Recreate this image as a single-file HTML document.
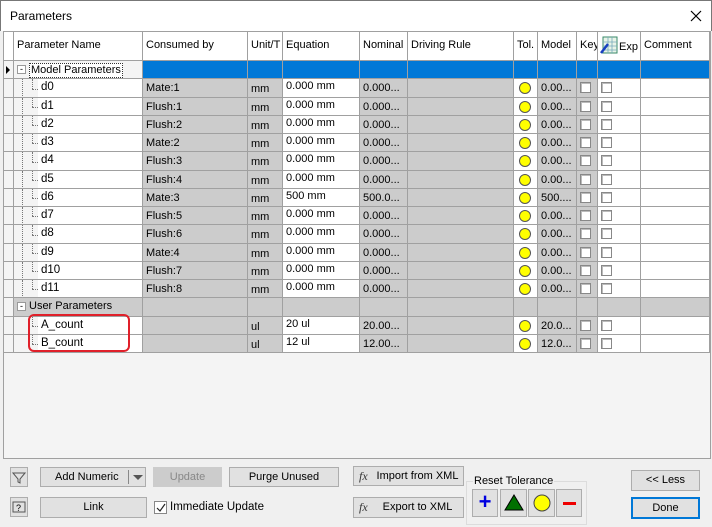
<!DOCTYPE html>
<html><head><meta charset="utf-8"><style>
*{box-sizing:border-box;margin:0;padding:0}
body{width:712px;height:527px;overflow:hidden;background:#f0f0f0;font-family:"Liberation Sans",sans-serif;font-size:11px;color:#000;position:relative}
.a{position:absolute}
#title{left:0;top:0;width:712px;height:31px;background:#fff;border:1px solid #777;border-bottom:none}
#grid{left:3px;top:31px;width:708px;height:428px;background:#f4f4f4;border:1px solid #a0a0a0;overflow:hidden}
.c{position:absolute;border-right:1px solid #a0a0a0;border-bottom:1px solid #a0a0a0;padding:2px 3px;white-space:nowrap;overflow:hidden;line-height:13px}
.btn{position:absolute;background:#e1e1e1;border:1px solid #adadad;text-align:center;line-height:18px;font-size:11px}
.cb{position:absolute;width:11px;height:11px;border:1px solid #888;background:#fff;box-shadow:inset 1px 1px 0 #bbb}
.dot{position:absolute;width:12px;height:12px;border-radius:50%;background:#ffff00;border:1px solid #555}
</style></head><body>
<div id="title" class="a"><span class="a" style="left:9px;top:8px;font-size:12px">Parameters</span>
<svg class="a" style="left:689px;top:9px" width="12" height="12"><path d="M1 1L11 11M11 1L1 11" stroke="#000" stroke-width="1.2"/></svg></div>
<div id="grid" class="a"></div>

<div class="btn" style="left:10px;top:467px;width:18px;height:20px"><svg width="14" height="14" style="margin-top:3px"><path d="M1 2H13L8 8V12L6 11V8Z" fill="none" stroke="#555"/></svg></div>
<div class="btn" style="left:40px;top:467px;width:106px;height:20px;text-align:left;padding-left:14px">Add Numeric<span class="a" style="left:87px;top:2px;height:14px;border-left:1px solid #888"></span><span class="a" style="left:92px;top:7px;border-left:5px solid transparent;border-right:5px solid transparent;border-top:5px solid #555"></span></div>
<div class="btn" style="left:153px;top:467px;width:69px;height:20px;background:#ccc;border-color:#ccc;color:#888">Update</div>
<div class="btn" style="left:229px;top:467px;width:110px;height:20px">Purge Unused</div>
<div class="btn" style="left:353px;top:466px;width:111px;height:20px;padding-left:18px"><i class="a" style="left:5px;top:0;font-family:'Liberation Serif';font-size:12px;color:#333">fx</i>Import from XML</div>
<div class="btn" style="left:10px;top:497px;width:18px;height:20px"><svg width="14" height="14" style="margin-top:3px"><rect x="1" y="1" width="12" height="10" fill="none" stroke="#555"/><text x="4" y="10" font-size="9" font-family="Liberation Sans">?</text></svg></div>
<div class="btn" style="left:40px;top:497px;width:107px;height:21px">Link</div>
<div class="cb" style="left:154px;top:501px;width:13px;height:13px;box-shadow:none"><svg class="a" style="left:1px;top:1px" width="10" height="10"><path d="M1 5L4 8L9 1" fill="none" stroke="#222" stroke-width="1.2"/></svg></div>
<span class="a" style="left:170px;top:501px;font-size:11.5px">Immediate Update</span>
<div class="btn" style="left:353px;top:497px;width:111px;height:21px;padding-left:18px"><i class="a" style="left:5px;top:0;font-family:'Liberation Serif';font-size:12px;color:#333">fx</i>Export to XML</div>
<div class="a" style="left:466px;top:481px;width:121px;height:44px;border:1px solid #dcdcdc"></div>
<span class="a" style="left:473px;top:475px;background:#f0f0f0;padding:0 1px">Reset Tolerance</span>
<div class="btn" style="left:472px;top:489px;width:26px;height:28px;color:#0000e0;font-size:22px;line-height:24px;font-weight:bold">+</div>
<div class="btn" style="left:500px;top:489px;width:27px;height:28px"><svg width="20" height="18" style="margin-top:4px"><path d="M10 1L19 16H1Z" fill="#007000" stroke="#000"/></svg></div>
<div class="btn" style="left:528px;top:489px;width:27px;height:28px"><svg width="20" height="20" style="margin-top:3px"><circle cx="10" cy="10" r="8" fill="#ff0" stroke="#444"/></svg></div>
<div class="btn" style="left:556px;top:489px;width:26px;height:28px"><span class="a" style="left:6px;top:12px;width:13px;height:3px;background:#e00"></span></div>
<div class="btn" style="left:631px;top:470px;width:69px;height:21px">&lt;&lt; Less</div>
<div class="btn" style="left:631px;top:497px;width:69px;height:22px;border:2px solid #0078d7">Done</div>

<script>
var g=document.getElementById('grid');
var X=[0,10,139,244,279,356,404,510,534,573,594,637,706];
var heads=['','Parameter Name','Consumed by','Unit/T','Equation','Nominal','Driving Rule','Tol.','Model','Key','Exp','Comment'];
function cell(i,y,h,txt,bg,extra){var d=document.createElement('div');d.className='c';d.style.left=X[i]+'px';d.style.top=y+'px';d.style.width=(X[i+1]-X[i])+'px';d.style.height=h+'px';d.style.background=bg;d.innerHTML=txt;if(extra)d.style.cssText+=extra;g.appendChild(d);return d;}
for(var i=0;i<12;i++){cell(i,0,29,heads[i],'#fff','line-height:22px;padding-top:2px');}
g.children[10].innerHTML='<svg style="position:absolute;left:2px;top:4px" width="18" height="18"><rect x="3" y="1" width="14" height="16" fill="#e8f4e8" stroke="#3a8a6a"/><path d="M3 6H17M3 10H17M3 14H17M8 1V17M12 1V17" stroke="#7ab" stroke-width=".8"/><path d="M1 17L8 8" stroke="#1840c0" stroke-width="2.5"/></svg><span style="position:absolute;left:21px;top:4px;line-height:22px">Exp</span>';
var G='#cccccc';
var rows=[];rows.push({t:'mp'});
var cons=['Mate:1','Flush:1','Flush:2','Mate:2','Flush:3','Flush:4','Mate:3','Flush:5','Flush:6','Mate:4','Flush:7','Flush:8'];
for(var k=0;k<12;k++)rows.push({t:'d',n:'d'+k,c:cons[k],u:'mm',e:k==6?'500 mm':'0.000 mm',nom:k==6?'500.0...':'0.000...',m:k==6?'500....':'0.00...'});
rows.push({t:'up'});
rows.push({t:'d',n:'A_count',c:'',u:'ul',e:'20 ul',nom:'20.00...',m:'20.0...'});
rows.push({t:'d',n:'B_count',c:'',u:'ul',e:'12 ul',nom:'12.00...',m:'12.0...'});
rows.forEach(function(r,ri){
 var y0=Math.round(30+ri*18.25)-1, h=Math.round(30+(ri+1)*18.25)-1-y0;
 cell(0,y0,h,ri==0?'<span style="position:absolute;left:2px;top:5px;border-top:4px solid transparent;border-bottom:4px solid transparent;border-left:4px solid #000"></span>':'','#f4f4f4');
 if(r.t=='mp'||r.t=='up'){
  var tx=r.t=='mp'?'Model Parameters':'User Parameters';
  var bg=r.t=='mp'?'#0078d7':G;
  cell(1,y0,h,'<span style="position:absolute;left:3px;top:4px;width:9px;height:9px;border:1px solid #999;background:#fff;font-size:9px;line-height:6px;text-align:center">-</span><span style="position:absolute;left:15px;top:2px;'+(r.t=='mp'?'border:1px dotted #333;padding:0 1px;background:#fff;':'')+'">'+tx+'</span>',r.t=='mp'?'#f4f4f4':G);
  for(var i=2;i<12;i++)cell(i,y0,h,'',bg);
 }else{
  cell(1,y0,h,'<span style="position:absolute;left:18px;top:0;height:'+(h/2)+'px;border-left:1px dotted #777;"></span><span style="position:absolute;left:18px;top:'+(h/2)+'px;width:6px;border-top:1px dotted #777"></span>'+(ri<13?'<span style="position:absolute;left:8px;top:0;height:'+h+'px;border-left:1px dotted #777"></span>':'')+'<span style="position:absolute;left:27px;top:2px;font-size:11.5px">'+r.n+'</span>','#f4f4f4','background:linear-gradient(90deg,#f4f4f4 24px,#fff 24px)');
  cell(2,y0,h,r.c,G,'padding-top:3px');
  cell(3,y0,h,r.u,G,'padding-top:4px');
  cell(4,y0,h,r.e,'#fff','padding-top:1px');
  cell(5,y0,h,r.nom,G,'padding-top:3px');
  cell(6,y0,h,'',G);
  cell(7,y0,h,'<div class="dot" style="left:5px;top:3px"></div>','#fff');
  cell(8,y0,h,r.m,G,'padding-top:3px');
  cell(9,y0,h,'<div class="cb" style="left:3px;top:3px"></div>',G);
  cell(10,y0,h,'<div class="cb" style="left:3px;top:3px"></div>','#fff');
  cell(11,y0,h,'','#fff');
 }
});
var r=document.createElement('div');r.style.cssText='position:absolute;left:24px;top:282px;width:102px;height:38px;border:2px solid #e0202a;border-radius:6px';g.appendChild(r);
</script>
</body></html>
